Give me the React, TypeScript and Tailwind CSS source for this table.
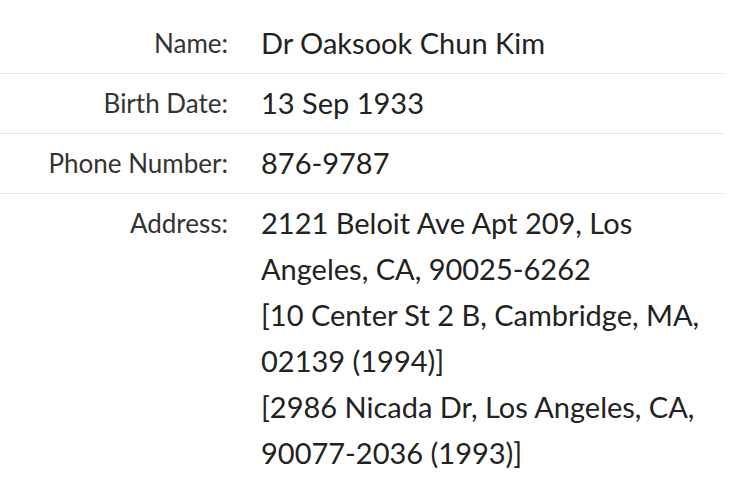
import React from "react";

const rows: { label: string; lines: string[] }[] = [
  { label: "Name:", lines: ["Dr Oaksook Chun Kim"] },
  { label: "Birth Date:", lines: ["13 Sep 1933"] },
  { label: "Phone Number:", lines: ["876-9787"] },
  {
    label: "Address:",
    lines: [
      "2121 Beloit Ave Apt 209, Los",
      "Angeles, CA, 90025-6262",
      "[10 Center St 2 B, Cambridge, MA,",
      "02139 (1994)]",
      "[2986 Nicada Dr, Los Angeles, CA,",
      "90077-2036 (1993)]",
    ],
  },
];

export default function App() {
  return (
    <div className="w-[746px] h-[498px] bg-white overflow-hidden pt-[14px] font-['Lato','Noto_Sans',sans-serif] text-[#222]">
      <div className="w-[723px]">
        {rows.map((r, i) => (
          <div key={r.label} className={`flex pt-[6px] pb-[7px] ${i < rows.length - 1 ? "border-b border-[#e4e4e4]" : ""}`}>
            <div className="w-[228px] shrink-0 text-right text-[26px] leading-[46px] text-[#333]">{r.label}</div>
            <div className="ml-[33px] text-[29px] leading-[46px]">
              {r.lines.map(l => <div key={l} className="whitespace-nowrap">{l}</div>)}
            </div>
          </div>
        ))}
      </div>
    </div>
  );
}
